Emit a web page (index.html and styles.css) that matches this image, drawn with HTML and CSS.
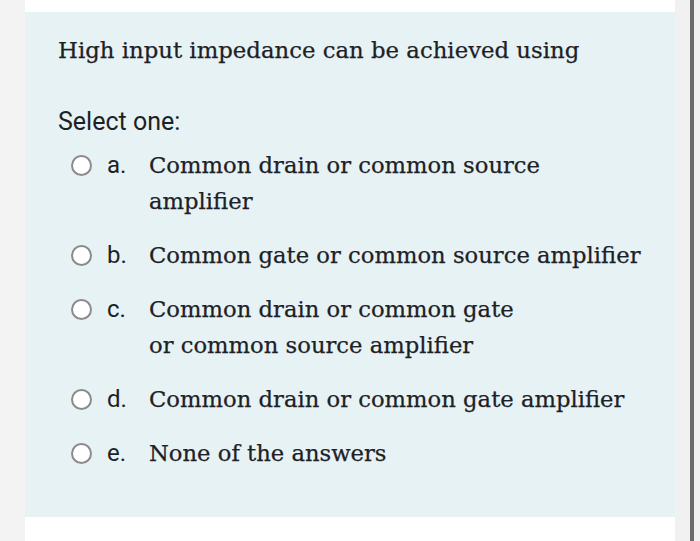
FILE: index.html
```html
<!DOCTYPE html>
<html lang="en">
<head>
<meta charset="utf-8">
<title>Question</title>
<link rel="stylesheet" href="styles.css">
</head>
<body>
<div class="layout">
  <div class="side"></div>
  <main class="page">
    <section class="que">
      <p class="qtext">High input impedance can be achieved using</p>
      <p class="prompt">Select one:</p>
      <div class="answers">
        <label class="opt">
          <span class="radio"></span>
          <span class="letter">a.</span>
          <span class="text">Common drain or common source amplifier</span>
        </label>
        <label class="opt">
          <span class="radio"></span>
          <span class="letter">b.</span>
          <span class="text">Common gate or common source amplifier</span>
        </label>
        <label class="opt">
          <span class="radio"></span>
          <span class="letter">c.</span>
          <span class="text">Common drain or common gate<br>or common source amplifier</span>
        </label>
        <label class="opt">
          <span class="radio"></span>
          <span class="letter">d.</span>
          <span class="text">Common drain or common gate amplifier</span>
        </label>
        <label class="opt">
          <span class="radio"></span>
          <span class="letter">e.</span>
          <span class="text">None of the answers</span>
        </label>
      </div>
    </section>
  </main>
  <div class="gutter"><div class="bar"></div></div>
</div>
</body>
</html>
```
FILE: styles.css
```css
html, body {
  margin: 0;
  padding: 0;
  height: 100%;
}
body {
  background: #f4f3f3;
  color: #1d2125;
}
.layout {
  display: flex;
  height: 541px;
}
.side {
  width: 25px;
  flex: none;
}
.page {
  width: 650px;
  flex: none;
  background: #ffffff;
  padding-top: 12px;
  box-sizing: border-box;
}
.gutter {
  width: 25px;
  flex: none;
  background: #f1f1f1;
  display: flex;
  padding-left: 15px;
  box-sizing: border-box;
}
.bar {
  width: 4px;
  background: #6b6b6b;
}
.que {
  background: #e7f2f5;
  height: 505px;
  box-sizing: border-box;
  padding: 20px 26px 0 33px;
}
.qtext {
  margin: 0;
  font-family: "DejaVu Serif", serif;
  font-size: 22.8px;
  line-height: 36px;
  -webkit-text-stroke: 0.25px #1d2125;
}
.prompt {
  margin: 36px 0 0;
  font-family: Roboto, "Liberation Sans", sans-serif;
  font-size: 25px;
  line-height: 36px;
}
.answers {
  margin-top: 7px;
  padding-left: 13px;
  display: flex;
  flex-direction: column;
  gap: 18px;
}
.opt {
  display: grid;
  grid-template-columns: 22px 28px 1fr;
  column-gap: 14px;
  align-items: start;
}
.radio {
  width: 21px;
  height: 21px;
  box-sizing: border-box;
  border: 2.5px solid #8a8a8a;
  border-radius: 50%;
  background: #ffffff;
  margin-top: 8px;
}
.letter {
  font-family: Roboto, "Liberation Sans", sans-serif;
  font-size: 24px;
  line-height: 36px;
}
.text {
  font-family: "DejaVu Serif", serif;
  font-size: 22.7px;
  line-height: 36px;
  -webkit-text-stroke: 0.25px #1d2125;
}
```
